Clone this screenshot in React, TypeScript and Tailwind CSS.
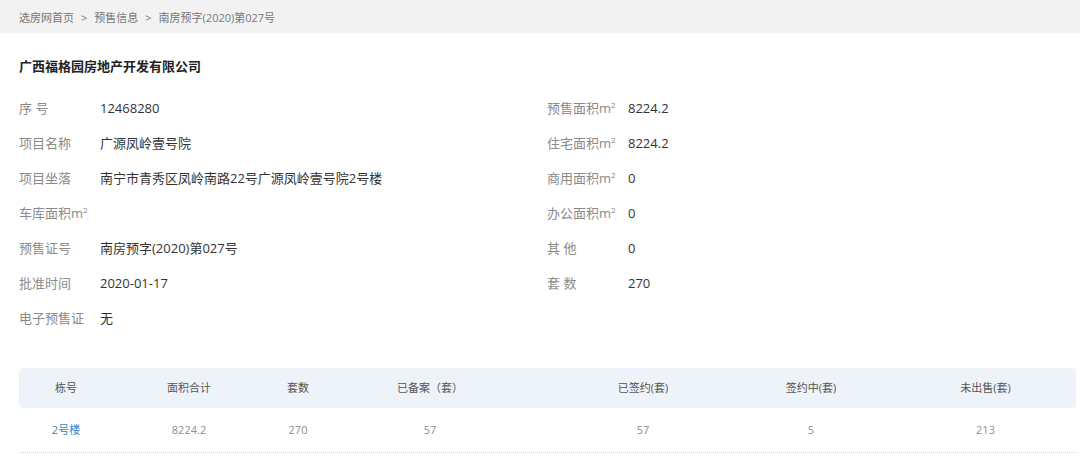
import React from 'react';

const font = "font-['Open_Sans','Noto_Sans_CJK_SC',sans-serif]";

const Sq = () => <sup className="text-[8px] -top-[5px]">2</sup>;

const leftRows: Array<{ label: React.ReactNode; value: string }> = [
  { label: '序 号', value: '12468280' },
  { label: '项目名称', value: '广源凤岭壹号院' },
  { label: '项目坐落', value: '南宁市青秀区凤岭南路22号广源凤岭壹号院2号楼' },
  { label: <>车库面积m<Sq /></>, value: '' },
  { label: '预售证号', value: '南房预字(2020)第027号' },
  { label: '批准时间', value: '2020-01-17' },
  { label: '电子预售证', value: '无' },
];

const rightRows: Array<{ label: React.ReactNode; value: string }> = [
  { label: <>预售面积m<Sq /></>, value: '8224.2' },
  { label: <>住宅面积m<Sq /></>, value: '8224.2' },
  { label: <>商用面积m<Sq /></>, value: '0' },
  { label: <>办公面积m<Sq /></>, value: '0' },
  { label: '其 他', value: '0' },
  { label: '套 数', value: '270' },
];

const headers = ['栋号', '面积合计', '套数', '已备案（套）', '已签约(套)', '签约中(套)', '未出售(套)'];
const cells = ['8224.2', '270', '57', '57', '5', '213'];

const InfoRow = ({ label, value }: { label: React.ReactNode; value: string }) => (
  <div className="flex items-center h-[35px]">
    <span className="w-[81px] shrink-0 text-[#8a8a8a]">{label}</span>
    <span className="text-[#333]">{value}</span>
  </div>
);

export default function App() {
  return (
    <div className={`${font} w-[1080px] h-[462px] bg-white overflow-hidden text-[13px]`}>
      <div className="h-[33px] bg-[#f2f2f2] flex items-center px-[19px] text-[11px] text-[#777] pt-[3px]">
        <span>选房网首页</span>
        <span className="mx-[7px]">&gt;</span>
        <span>预售信息</span>
        <span className="mx-[7px]">&gt;</span>
        <span>南房预字(2020)第027号</span>
      </div>

      <div className="px-[19px]">
        <h1 className="font-bold text-[13px] text-[#222] mt-[23px] h-[20px] leading-[20px]">广西福格园房地产开发有限公司</h1>

        <div className="flex mt-[15px]">
          <div className="w-[528px]">
            {leftRows.map((r, i) => (
              <InfoRow key={i} label={r.label} value={r.value} />
            ))}
          </div>
          <div>
            {rightRows.map((r, i) => (
              <InfoRow key={i} label={r.label} value={r.value} />
            ))}
          </div>
        </div>

        <div className="mt-[32px] w-[1057px] text-[11px]">
          <div className="grid grid-cols-[94px_152px_66px_198px_228px_108px_1fr] h-[40px] items-center bg-[#eef3fa] rounded-[4px] text-[#555]">
            {headers.map((h, i) => (
              <div key={i} className={`text-center ${i === 6 ? 'pl-[30px]' : ''}`}>{h}</div>
            ))}
          </div>
          <div className="grid grid-cols-[94px_152px_66px_198px_228px_108px_1fr] h-[45px] items-center border-b border-dotted border-[#cfcfcf] text-[#8f8f8f]">
            <div className="text-center text-[#3b7fc4]">2号楼</div>
            {cells.map((c, i) => (
              <div key={i} className={`text-center ${i === 5 ? 'pl-[30px]' : ''}`}>{c}</div>
            ))}
          </div>
        </div>
      </div>
    </div>
  );
}
